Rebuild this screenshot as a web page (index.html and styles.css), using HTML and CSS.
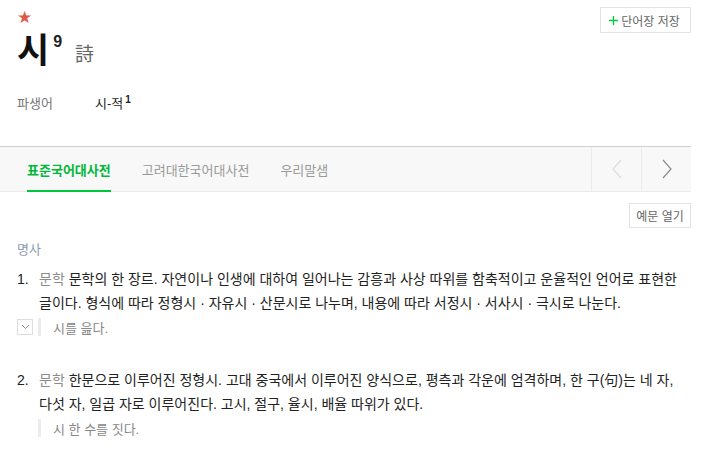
FILE: index.html
```html
<!DOCTYPE html>
<html lang="ko">
<head>
<meta charset="utf-8">
<link rel="stylesheet" href="styles.css">
</head>
<body>
<div class="page">
  <header class="entry-head">
    <div class="head-top">
      <span class="star">★</span>
      <button class="save-btn"><svg class="plus" width="9" height="9" viewBox="0 0 9 9"><path d="M4.5 0 V9 M0 4.5 H9" stroke="#00c73c" stroke-width="1.3"/></svg><span>단어장 저장</span></button>
    </div>
    <div class="title-row">
      <h1 class="word">시</h1><sup class="hom">9</sup>
      <span class="hanja">詩</span>
    </div>
    <div class="deriv-row">
      <span class="deriv-label">파생어</span>
      <span class="deriv-word">시-적<sup>1</sup></span>
    </div>
  </header>

  <nav class="tabs">
    <a class="tab active">표준국어대사전</a>
    <a class="tab">고려대한국어대사전</a>
    <a class="tab">우리말샘</a>
    <div class="tab-arrows">
      <span class="arrow prev"><svg width="12" height="20" viewBox="0 0 12 20"><path d="M10 1 L2 10 L10 19" fill="none" stroke="currentColor" stroke-width="1.2"/></svg></span>
      <span class="arrow next"><svg width="12" height="20" viewBox="0 0 12 20"><path d="M2 1 L10 10 L2 19" fill="none" stroke="currentColor" stroke-width="1.2"/></svg></span>
    </div>
  </nav>

  <div class="toolbar">
    <button class="ex-btn">예문 열기</button>
  </div>

  <section class="senses">
    <div class="pos">명사</div>
    <ol class="sense-list">
      <li class="sense">
        <span class="num">1.</span>
        <p class="def"><span class="field">문학</span> <span>문학의 한 장르. 자연이나 인생에 대하여 일어나는 감흥과 사상 따위를 함축적이고 운율적인 언어로 표현한 글이다. 형식에 따라 정형시 · 자유시 · 산문시로 나누며, 내용에 따라 서정시 · 서사시 · 극시로 나눈다.</span></p>
        <div class="example">
          <span class="toggle"><svg width="9" height="6" viewBox="0 0 9 6"><path d="M1 1 L4.5 4.5 L8 1" fill="none" stroke="#8a94a6" stroke-width="1"/></svg></span>
          <span class="bar"></span>
          <span class="ex-text">시를 읊다.</span>
        </div>
      </li>
      <li class="sense">
        <span class="num">2.</span>
        <p class="def"><span class="field">문학</span> <span>한문으로 이루어진 정형시. 고대 중국에서 이루어진 양식으로, 평측과 각운에 엄격하며, 한 구(句)는 네 자, 다섯 자, 일곱 자로 이루어진다. 고시, 절구, 율시, 배율 따위가 있다.</span></p>
        <div class="example">
          <span class="toggle-space"></span>
          <span class="bar"></span>
          <span class="ex-text">시 한 수를 짓다.</span>
        </div>
      </li>
    </ol>
  </section>
</div>
</body>
</html>
```

FILE: styles.css
```css
* { box-sizing: border-box; }
html, body { margin: 0; padding: 0; background: #fff; }
body {
  font-family: "Liberation Sans", "Noto Sans CJK KR", sans-serif;
  color: #222;
  width: 713px;
}
.page { width: 691px; }

.entry-head { padding: 7px 0 0 17px; height: 146px; }
.head-top { display: flex; justify-content: space-between; align-items: flex-start; height: 26px; }
.star { color: #e0584b; font-size: 17px; line-height: 17px; margin-top: 2px; font-family: "DejaVu Sans", sans-serif; }
.save-btn {
  font-family: inherit; font-size: 12px; color: #666; background: #fff;
  border: 1px solid #e3e3e3; height: 26px; width: 91px; padding: 0;
  display: flex; align-items: center; justify-content: center; gap: 3px;
}
.plus { display: block; margin-left: -2px; }

.title-row { display: flex; align-items: flex-start; height: 46px; }
.word { margin: 0; font-size: 35px; font-weight: 700; line-height: 42px; color: #111; margin-top: -3px; letter-spacing: -1px; }
.hom { font-size: 16px; font-weight: 700; line-height: 16px; margin-left: 5px; margin-top: 1px; vertical-align: top; }
.hanja { font-size: 19px; color: #666; margin-left: 13px; margin-top: 11px; line-height: 22px; }

.deriv-row { display: flex; align-items: baseline; margin-top: 14px; font-size: 13px; }
.deriv-label { color: #777; width: 78px; }
.deriv-word { color: #222; }
.deriv-word sup { font-size: 10px; font-weight: 700; vertical-align: 5px; line-height: 0; margin-left: 2px; }

.tabs {
  display: flex; align-items: stretch; height: 46px;
  border-top: 1px solid #cfcfcf; border-bottom: 1px solid #ebebeb;
  background: #f8f8f8; padding-left: 27px;
}
.tab {
  font-size: 13px; color: #999;
  display: flex; align-items: center; margin-right: 31px;
  border-bottom: 2px solid transparent; margin-bottom: -1px; padding-top: 1px;
}
.tab.active { color: #00b83a; font-weight: 700; border-bottom-color: #00c73c; }
.tab-arrows { margin-left: auto; display: flex; }
.arrow {
  width: 50px; border-left: 1px solid #ebebeb;
  display: flex; align-items: center; justify-content: center;
}
.arrow.prev { color: #dcdcdc; }
.arrow.next { color: #8a8a8a; }

.toolbar { display: flex; justify-content: flex-end; padding-top: 11px; }
.ex-btn {
  font-family: inherit; font-size: 12px; color: #666; background: #fff;
  border: 1px solid #e3e3e3; height: 25px; width: 62px; padding: 0;
}

.senses { padding-left: 17px; }
.pos { font-size: 13px; color: #8d9bb3; margin-top: 13px; line-height: 18px; }
.sense-list { list-style: none; margin: 8px 0 0; padding: 0; }
.sense { display: grid; grid-template-columns: 22px 1fr; margin-bottom: 32px; }
.num { font-size: 14px; line-height: 24px; color: #222; }
.def { margin: 0; font-size: 14px; line-height: 24px; color: #222; word-break: keep-all; }
.field { color: #8c8c8c; }
.example {
  grid-column: 1 / 3; display: flex; align-items: center; height: 18px; margin-top: 3px;
}
.toggle {
  width: 16px; height: 16px; border: 1px solid #dedede; display: flex; align-items: center; justify-content: center;
}
.toggle-space { width: 16px; }
.bar { width: 3px; height: 18px; background: #ebebeb; margin-left: 5px; }
.ex-text { font-size: 13px; color: #888; margin-left: 12px; }
```
